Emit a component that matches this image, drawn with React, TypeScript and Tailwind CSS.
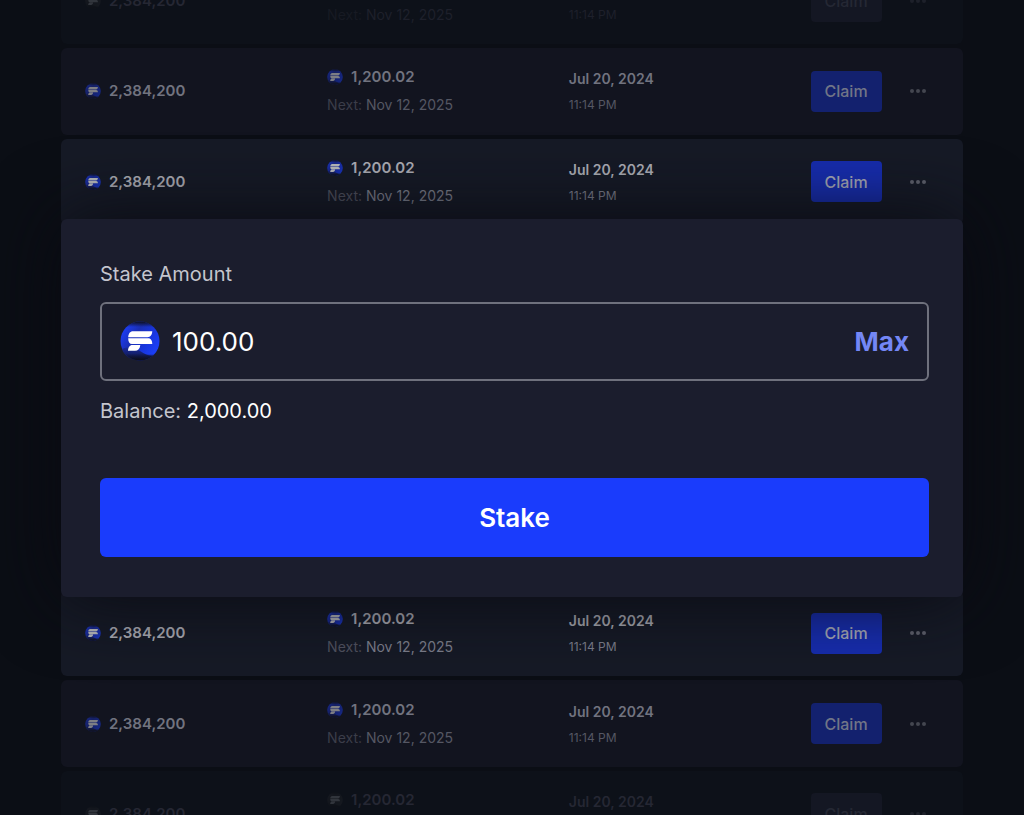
import { useId, useState } from 'react';
import { clsx } from 'clsx';

type Tone = 'near' | 'mid' | 'far';

const rows: Tone[] = ['far', 'mid', 'near', 'near', 'near', 'near', 'near', 'near', 'mid', 'far'];

const tones = {
  near: {
    cell: 'bg-[#161a26]',
    strong: 'text-[#acadb5]',
    soft: 'text-[#7c7e8b]',
    faint: 'text-[#50525f]',
    token: 'opacity-70',
    claim: 'bg-[#172dae] text-[#a5a8b8]',
    dots: 'bg-[#5f616d]',
  },
  mid: {
    cell: 'bg-[#12141f]',
    strong: 'text-[#71737f]',
    soft: 'text-[#555763]',
    faint: 'text-[#3b3d49]',
    token: 'opacity-45',
    claim: 'bg-[#13216e] text-[#717587]',
    dots: 'bg-[#444650]',
  },
  far: {
    cell: 'bg-[#0d1119]',
    strong: 'text-[#252733]',
    soft: 'text-[#1e202b]',
    faint: 'text-[#171a23]',
    token: 'opacity-15 grayscale',
    claim: 'bg-[#141723] text-[#252834]',
    dots: 'bg-[#1d202a]',
  },
};

function TokenIcon({ className }: { className?: string }) {
  const id = useId();

  return (
    <svg viewBox="0 0 40 40" className={clsx('shrink-0', className)} aria-hidden="true">
      <defs>
        <linearGradient id={`${id}-blue`} x1="0" y1="0.2" x2="1" y2="0.8">
          <stop offset="0" stopColor="#1d3fff" />
          <stop offset="0.35" stopColor="#1a2fb4" />
          <stop offset="0.6" stopColor="#1834d8" />
          <stop offset="1" stopColor="#1c42ff" />
        </linearGradient>
        <linearGradient id={`${id}-shade`} x1="0" y1="0" x2="0" y2="1">
          <stop offset="0" stopColor="#0c0e1a" />
          <stop offset="0.14" stopColor="#0c0e1a" stopOpacity="0" />
          <stop offset="0.82" stopColor="#0c0e1a" stopOpacity="0" />
          <stop offset="1" stopColor="#0c0e1a" />
        </linearGradient>
        <linearGradient id={`${id}-wave`} x1="0" y1="0" x2="0" y2="1">
          <stop offset="0" stopColor="#182a9c" />
          <stop offset="1" stopColor="#10143a" />
        </linearGradient>
      </defs>
      <circle cx="20" cy="20" r="19.5" fill={`url(#${id}-blue)`} />
      <path
        d="M2 28C9 25 15 27 20 30C26 34 31 35.500 34 34C30 38 25 39.500 20 39.500C11 39.500 4 35 2 28Z"
        fill={`url(#${id}-wave)`}
      />
      <circle cx="20" cy="20" r="19.500" fill={`url(#${id}-shade)`} />
      <path
        d="M13 10.300H32.300C32 14 30.500 16.200 27.500 16.200H8.200C8.500 12.500 10 10.300 13 10.300ZM8.200 17.200H28C30.500 17.200 32.300 19 32.300 23H12C9.500 23 8.200 21 8.200 17.200ZM12.500 24H20.300C20 27.800 18 29.800 15 29.800H8C8.200 26.500 9.500 24 12.500 24Z"
        fill="#fff"
      />
    </svg>
  );
}

function StakeRow({ tone }: { tone: Tone }) {
  const t = tones[tone];

  return (
    <tr>
      <td className={clsx('rounded-l-md pl-6', t.cell)}>
        <div className="flex items-center gap-2">
          <TokenIcon className={clsx('size-4', t.token)} />
          <span className={clsx('text-[15px] leading-5 font-semibold', t.strong)}>2,384,200</span>
        </div>
      </td>
      <td className={t.cell}>
        <div className="flex items-center gap-2">
          <TokenIcon className={clsx('size-4', t.token)} />
          <span className={clsx('text-[15px] leading-5 font-semibold', t.strong)}>1,200.02</span>
        </div>
        <p className={clsx('mt-2 text-sm', t.soft)}>
          <span className={t.faint}>Next:</span> Nov 12, 2025
        </p>
      </td>
      <td className={t.cell}>
        <p className={clsx('text-sm font-semibold', t.strong)}>Jul 20, 2024</p>
        <p className={clsx('mt-2 text-xs', t.soft)}>11:14 PM</p>
      </td>
      <td className={t.cell}>
        <button type="button" className={clsx('h-[41px] w-[71px] rounded text-base font-medium', t.claim)}>
          Claim
        </button>
      </td>
      <td className={clsx('rounded-r-md', t.cell)}>
        <button type="button" aria-label="More options" className="flex h-8 w-12 items-center justify-center gap-0.5">
          <span className={clsx('size-1 rounded-full', t.dots)} />
          <span className={clsx('size-1 rounded-full', t.dots)} />
          <span className={clsx('size-1 rounded-full', t.dots)} />
        </button>
      </td>
    </tr>
  );
}

function StakeDialog() {
  const [amount, setAmount] = useState('100.00');

  return (
    <form
      role="dialog"
      aria-label="Stake"
      onSubmit={(e) => e.preventDefault()}
      className="w-full rounded-md bg-[#1b1d2d] pt-[43px] pr-[34px] pb-10 pl-[39px] shadow-[0_0_72px_#090a11]"
    >
      <label htmlFor="stake-amount" className="block text-xl leading-6 text-[#c4c5cd]">
        Stake Amount
      </label>
      <div className="mt-4 flex h-[79px] items-center rounded-md border-2 border-[#6f717d] px-[18px]">
        <TokenIcon className="size-10" />
        <input
          id="stake-amount"
          type="text"
          inputMode="decimal"
          value={amount}
          onChange={(e) => setAmount(e.target.value)}
          className="ml-3 min-w-0 flex-1 bg-transparent text-[26px] text-white outline-none"
        />
        <button type="button" onClick={() => setAmount('2,000.00')} className="text-[26px] font-bold text-[#7487f5]">
          Max
        </button>
      </div>
      <p className="mt-[18px] text-xl leading-6 text-[#c4c5cd]">
        Balance: <span className="text-white">2,000.00</span>
      </p>
      <button type="submit" className="mt-[55px] h-[79px] w-full rounded-md bg-[#1a3cfc] text-[26px] font-semibold text-white">
        Stake
      </button>
    </form>
  );
}

export default function App() {
  return (
    <div className="relative flex h-screen items-center overflow-hidden bg-[#0b0e15] px-[61px] font-['Inter',sans-serif]">
      <table className="h-[907px] w-full table-fixed border-separate border-spacing-x-0 border-spacing-y-1">
        <colgroup>
          <col className="w-[29.5%]" />
          <col className="w-[26.8%]" />
          <col className="w-[26.8%]" />
          <col className="w-[9.3%]" />
          <col className="w-[7.6%]" />
        </colgroup>
        <tbody>
          {rows.map((tone, i) => (
            <StakeRow key={i} tone={tone} />
          ))}
        </tbody>
      </table>
      <div className="absolute inset-0 flex items-center px-[61px]">
        <StakeDialog />
      </div>
    </div>
  );
}
